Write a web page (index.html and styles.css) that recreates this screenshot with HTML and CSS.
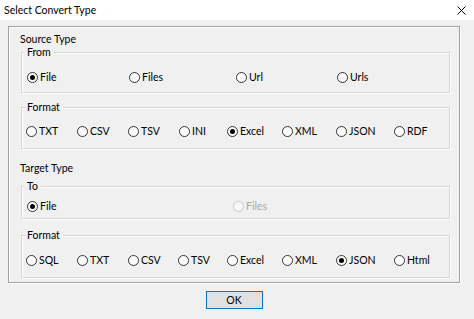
FILE: index.html
```html
<!DOCTYPE html>
<html>
<head>
<meta charset="utf-8">
<title>Select Convert Type</title>
<link rel="stylesheet" href="styles.css">
</head>
<body>
<div class="titlebar">
  <span class="title">Select Convert Type</span>
  <svg class="close" width="9" height="9" viewBox="0 0 9 9"><path d="M0.5 0.5 L8.5 8.5 M8.5 0.5 L0.5 8.5" stroke="#000" stroke-width="1" fill="none"/></svg>
</div>
<div class="panel">
  <div class="section-label">Source Type</div>
  <div class="group group-from">
    <div class="group-title">From</div>
    <div class="row row-source">
      <label class="radio checked"><span class="circle"></span><span>File</span></label>
      <label class="radio"><span class="circle"></span><span>Files</span></label>
      <label class="radio"><span class="circle"></span><span>Url</span></label>
      <label class="radio"><span class="circle"></span><span>Urls</span></label>
    </div>
  </div>
  <div class="group group-format1">
    <div class="group-title">Format</div>
    <div class="row row-format1">
      <label class="radio"><span class="circle"></span><span>TXT</span></label>
      <label class="radio"><span class="circle"></span><span>CSV</span></label>
      <label class="radio"><span class="circle"></span><span>TSV</span></label>
      <label class="radio"><span class="circle"></span><span>INI</span></label>
      <label class="radio checked"><span class="circle"></span><span>Excel</span></label>
      <label class="radio"><span class="circle"></span><span>XML</span></label>
      <label class="radio"><span class="circle"></span><span>JSON</span></label>
      <label class="radio"><span class="circle"></span><span>RDF</span></label>
    </div>
  </div>
  <div class="section-label section-target">Target Type</div>
  <div class="group group-to">
    <div class="group-title">To</div>
    <div class="row row-target">
      <label class="radio checked"><span class="circle"></span><span>File</span></label>
      <label class="radio disabled"><span class="circle"></span><span>Files</span></label>
    </div>
  </div>
  <div class="group group-format2">
    <div class="group-title">Format</div>
    <div class="row row-format2">
      <label class="radio"><span class="circle"></span><span>SQL</span></label>
      <label class="radio"><span class="circle"></span><span>TXT</span></label>
      <label class="radio"><span class="circle"></span><span>CSV</span></label>
      <label class="radio"><span class="circle"></span><span>TSV</span></label>
      <label class="radio"><span class="circle"></span><span>Excel</span></label>
      <label class="radio"><span class="circle"></span><span>XML</span></label>
      <label class="radio checked"><span class="circle"></span><span>JSON</span></label>
      <label class="radio"><span class="circle"></span><span>Html</span></label>
    </div>
  </div>
</div>
<div class="actions">
  <button class="ok" type="button">OK</button>
</div>
</body>
</html>
```
FILE: styles.css
```css
* { box-sizing: border-box; }
html, body { margin: 0; padding: 0; }
body {
  width: 474px;
  height: 319px;
  overflow: hidden;
  background: #f0f0f0;
  font-family: Lato, "Noto Sans", sans-serif;
  font-size: 10.5px;
  color: #000;
}
.titlebar {
  height: 20px;
  background: #fff;
  display: flex;
  align-items: center;
  justify-content: space-between;
  padding: 0 8px 0 4px;
}
.title { line-height: 14px; }
.close { display: block; }

.panel {
  margin: 6px 0 0 8px;
  width: 452px;
  border: 1px solid #a0a0a0;
  box-shadow: inset 1px 1px 0 #fff, 1px 1px 0 #fff;
  padding: 5px 9px 4px 12px;
}
.section-label { line-height: 14px; margin-left: -1px; }
.section-target { margin-top: 12px; }

.group {
  border: 1px solid #d5d5d5;
  box-shadow: inset 1px 1px 0 #fff, 1px 1px 0 #fff;
}
.group-title {
  width: max-content;
  margin: -7px 0 0 2px;
  padding: 0 3px;
  background: #f0f0f0;
  line-height: 13px;
}
.group-from { margin-top: 6px; padding-bottom: 7px; }
.group-from .row { margin-top: 10px; }
.group-format1 { margin-top: 14px; padding-bottom: 9px; }
.group-format1 .row { margin-top: 9px; }
.group-to { margin-top: 11px; padding-bottom: 4px; }
.group-to .row { margin-top: 5px; }
.group-format2 { margin-top: 16px; padding-bottom: 9px; }
.group-format2 .row { margin-top: 10px; }

.row {
  display: grid;
  height: 16px;
  align-items: center;
}
.row-source { grid-template-columns: 102px 107px 101px auto; padding-left: 5px; }
.row-target { grid-template-columns: 206px auto; padding-left: 5px; }
.row-format1 { grid-template-columns: 51px 51px 51px 48px 55px 54px 58px auto; padding-left: 4px; }
.row-format2 { grid-template-columns: 51px 51px 50px 49px 55px 54px 58px auto; padding-left: 4px; }

.radio {
  display: flex;
  align-items: center;
  white-space: nowrap;
  line-height: 14px;
}
.circle {
  flex: none;
  width: 11px;
  height: 11px;
  margin-right: 2px;
  border: 1px solid #333;
  border-radius: 50%;
  background: #fff;
  display: flex;
  align-items: center;
  justify-content: center;
}
.radio.checked .circle::after {
  content: "";
  width: 5px;
  height: 5px;
  border-radius: 50%;
  background: #000;
}
.radio.disabled { color: #a8a8a8; }
.radio.disabled .circle { border-color: #c8c8c8; background: #f8f8f8; }

.actions {
  width: 452px;
  margin: 8px 0 0 8px;
  display: flex;
  justify-content: center;
}
.ok {
  width: 57px;
  height: 18px;
  padding: 0;
  border: 1px solid #0078d7;
  background: #e1e1e1;
  font: inherit;
  line-height: 16px;
  color: #000;
}
```
